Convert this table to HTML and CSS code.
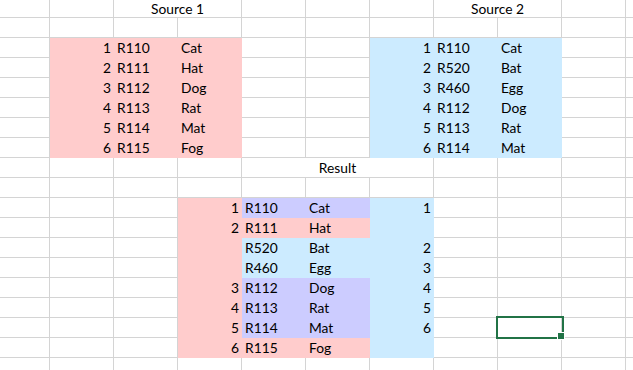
FILE: index.html
```html
<!DOCTYPE html>
<html>
<head>
<meta charset="utf-8">
<link rel="stylesheet" href="styles.css">
</head>
<body>
<div class="sheet">
  <!-- row 0 -->
  <div class="c"></div><div class="c"></div><div class="c m2 ctr">Source 1</div><div class="c"></div><div class="c"></div><div class="c"></div><div class="c m2 ctr">Source 2</div><div class="c"></div><div class="c"></div>
  <!-- row 1 -->
  <div class="c"></div><div class="c"></div><div class="c"></div><div class="c"></div><div class="c"></div><div class="c"></div><div class="c"></div><div class="c"></div><div class="c"></div><div class="c"></div><div class="c"></div>
  <!-- rows 2-7 -->
  <div class="c"></div><div class="c pk r">1</div><div class="c pk">R110</div><div class="c pk">Cat</div><div class="c"></div><div class="c"></div><div class="c bl r">1</div><div class="c bl">R110</div><div class="c bl">Cat</div><div class="c"></div><div class="c"></div>
  <div class="c"></div><div class="c pk r">2</div><div class="c pk">R111</div><div class="c pk">Hat</div><div class="c"></div><div class="c"></div><div class="c bl r">2</div><div class="c bl">R520</div><div class="c bl">Bat</div><div class="c"></div><div class="c"></div>
  <div class="c"></div><div class="c pk r">3</div><div class="c pk">R112</div><div class="c pk">Dog</div><div class="c"></div><div class="c"></div><div class="c bl r">3</div><div class="c bl">R460</div><div class="c bl">Egg</div><div class="c"></div><div class="c"></div>
  <div class="c"></div><div class="c pk r">4</div><div class="c pk">R113</div><div class="c pk">Rat</div><div class="c"></div><div class="c"></div><div class="c bl r">4</div><div class="c bl">R112</div><div class="c bl">Dog</div><div class="c"></div><div class="c"></div>
  <div class="c"></div><div class="c pk r">5</div><div class="c pk">R114</div><div class="c pk">Mat</div><div class="c"></div><div class="c"></div><div class="c bl r">5</div><div class="c bl">R113</div><div class="c bl">Rat</div><div class="c"></div><div class="c"></div>
  <div class="c"></div><div class="c pk r">6</div><div class="c pk">R115</div><div class="c pk">Fog</div><div class="c"></div><div class="c"></div><div class="c bl r">6</div><div class="c bl">R114</div><div class="c bl">Mat</div><div class="c"></div><div class="c"></div>
  <!-- row 8 -->
  <div class="c"></div><div class="c"></div><div class="c"></div><div class="c"></div><div class="c m3 ctr">Result</div><div class="c"></div><div class="c"></div><div class="c"></div><div class="c"></div>
  <!-- row 9 -->
  <div class="c"></div><div class="c"></div><div class="c"></div><div class="c"></div><div class="c"></div><div class="c"></div><div class="c"></div><div class="c"></div><div class="c"></div><div class="c"></div><div class="c"></div>
  <!-- rows 10-17 -->
  <div class="c"></div><div class="c"></div><div class="c"></div><div class="c pk r">1</div><div class="c pu">R110</div><div class="c pu">Cat</div><div class="c bl r">1</div><div class="c"></div><div class="c"></div><div class="c"></div><div class="c"></div>
  <div class="c"></div><div class="c"></div><div class="c"></div><div class="c pk r">2</div><div class="c pk">R111</div><div class="c pk">Hat</div><div class="c bl r"></div><div class="c"></div><div class="c"></div><div class="c"></div><div class="c"></div>
  <div class="c"></div><div class="c"></div><div class="c"></div><div class="c pk r"></div><div class="c bl">R520</div><div class="c bl">Bat</div><div class="c bl r">2</div><div class="c"></div><div class="c"></div><div class="c"></div><div class="c"></div>
  <div class="c"></div><div class="c"></div><div class="c"></div><div class="c pk r"></div><div class="c bl">R460</div><div class="c bl">Egg</div><div class="c bl r">3</div><div class="c"></div><div class="c"></div><div class="c"></div><div class="c"></div>
  <div class="c"></div><div class="c"></div><div class="c"></div><div class="c pk r">3</div><div class="c pu">R112</div><div class="c pu">Dog</div><div class="c bl r">4</div><div class="c"></div><div class="c"></div><div class="c"></div><div class="c"></div>
  <div class="c"></div><div class="c"></div><div class="c"></div><div class="c pk r">4</div><div class="c pu">R113</div><div class="c pu">Rat</div><div class="c bl r">5</div><div class="c"></div><div class="c"></div><div class="c"></div><div class="c"></div>
  <div class="c"></div><div class="c"></div><div class="c"></div><div class="c pk r">5</div><div class="c pu">R114</div><div class="c pu">Mat</div><div class="c bl r">6</div><div class="c"></div><div class="c"></div><div class="c"></div><div class="c"></div>
  <div class="c"></div><div class="c"></div><div class="c"></div><div class="c pk r">6</div><div class="c pk">R115</div><div class="c pk">Fog</div><div class="c bl r"></div><div class="c"></div><div class="c"></div><div class="c"></div><div class="c"></div>
  <!-- row 18 -->
  <div class="c"></div><div class="c"></div><div class="c"></div><div class="c"></div><div class="c"></div><div class="c"></div><div class="c"></div><div class="c"></div><div class="c"></div><div class="c"></div><div class="c"></div>
  <div class="sel"><span class="handle"></span></div>
</div>
</body>
</html>
```
FILE: styles.css
```css
html, body {
  margin: 0;
  padding: 0;
  background: #fff;
  overflow: hidden;
}
.sheet {
  position: relative;
  display: grid;
  grid-template-columns: 50px repeat(10, 64px);
  grid-template-rows: 18px repeat(18, 20px);
  width: 633px;
  height: 370px;
  overflow: hidden;
  font-family: "Lato", "Liberation Sans", sans-serif;
  font-size: 13.8px;
  color: #000;
}
.c {
  box-sizing: border-box;
  border-right: 1px solid #d4d4d4;
  border-bottom: 1px solid #d4d4d4;
  padding: 0 3px;
  line-height: 19px;
  white-space: nowrap;
  overflow: hidden;
}
.sheet > .c:nth-child(-n+9) {
  line-height: 17px;
}
.m2 { grid-column: span 2; }
.m3 { grid-column: span 3; }
.ctr { text-align: center; }
.r { text-align: right; padding: 0 2px 0 3px; }
.pk { background: #ffcccc; border-color: #ffcccc; }
.bl { background: #ccebff; border-color: #ccebff; }
.pu { background: #ccccff; border-color: #ccccff; }
.sel {
  position: absolute;
  left: 496px;
  top: 316px;
  width: 68px;
  height: 23px;
  box-sizing: border-box;
  border: 2px solid #217346;
}
.handle {
  position: absolute;
  right: -3px;
  bottom: -3px;
  width: 6px;
  height: 6px;
  background: #217346;
  border: 1px solid #fff;
}
```
